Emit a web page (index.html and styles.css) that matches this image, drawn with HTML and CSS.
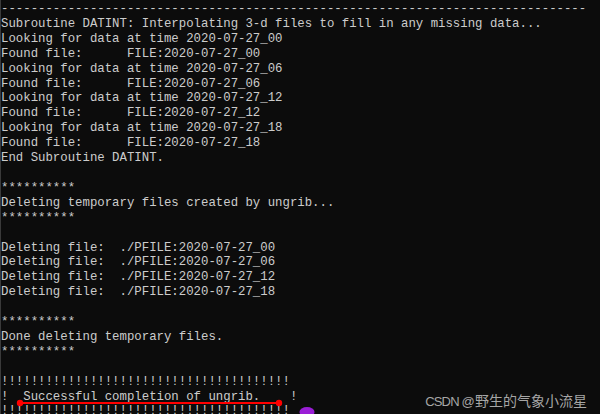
FILE: index.html
```html
<!DOCTYPE html>
<html>
<head>
<meta charset="utf-8">
<link rel="stylesheet" href="styles.css">
</head>
<body>
<div class="console">
<pre class="out">-------------------------------------------------------------------------------
Subroutine DATINT: Interpolating 3-d files to fill in any missing data...
Looking for data at time 2020-07-27_00
Found file:      FILE:2020-07-27_00
Looking for data at time 2020-07-27_06
Found file:      FILE:2020-07-27_06
Looking for data at time 2020-07-27_12
Found file:      FILE:2020-07-27_12
Looking for data at time 2020-07-27_18
Found file:      FILE:2020-07-27_18
End Subroutine DATINT.

**********
Deleting temporary files created by ungrib...
**********

Deleting file:  ./PFILE:2020-07-27_00
Deleting file:  ./PFILE:2020-07-27_06
Deleting file:  ./PFILE:2020-07-27_12
Deleting file:  ./PFILE:2020-07-27_18

**********
Done deleting temporary files.
**********

!!!!!!!!!!!!!!!!!!!!!!!!!!!!!!!!!!!!!!!
!  Successful completion of ungrib.    !
!!!!!!!!!!!!!!!!!!!!!!!!!!!!!!!!!!!!!!!</pre>
<svg class="mark" width="290" height="20" viewBox="0 0 290 20">
  <line x1="20" y1="10" x2="279" y2="10" stroke="#ff0000" stroke-width="2"/>
  <circle cx="20" cy="10" r="3.2" fill="#ff0000"/>
  <circle cx="279" cy="10" r="3.2" fill="#ff0000"/>
</svg>
<svg class="blob" width="20" height="14" viewBox="0 0 20 14">
  <ellipse cx="10" cy="9" rx="7.5" ry="5" fill="#9a1ed6"/>
</svg>
<div class="watermark"><span class="lat">CSDN @</span>野生的气象小流星</div>
</div>
</body>
</html>
```
FILE: styles.css
```css
html, body {
  margin: 0;
  padding: 0;
  background: #0c0c0c;
}
.console {
  position: relative;
  width: 600px;
  height: 414px;
  overflow: hidden;
  background: #0c0c0c;
  border-left: 1px solid #3a3a3a;
  box-sizing: border-box;
}
.out {
  margin: 0;
  padding: 2px 0 0 0;
  font-family: "Liberation Mono", monospace;
  font-size: 12.35px;
  line-height: 14.9px;
  color: #cccccc;
  white-space: pre;
}
.mark {
  position: absolute;
  left: -1px;
  top: 393px;
}
.blob {
  position: absolute;
  left: 296px;
  top: 403px;
}
.watermark {
  position: absolute;
  right: 13px;
  top: 391px;
  font-family: "Noto Sans CJK SC", sans-serif;
  font-size: 14px;
  line-height: 18px;
  color: #a6a6a6;
  white-space: nowrap;
}
.lat {
  font-family: "Liberation Sans", sans-serif;
  font-size: 13px;
  letter-spacing: -0.8px;
  margin-right: 1px;
}
```
